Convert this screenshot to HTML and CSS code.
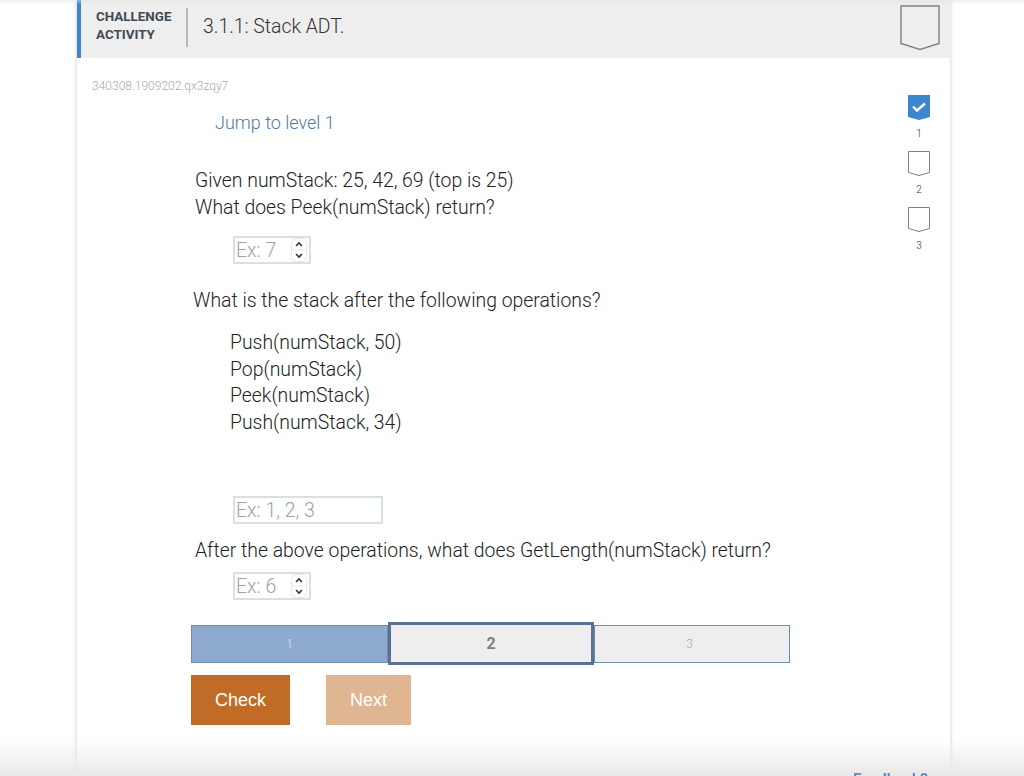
FILE: index.html
```html
<!DOCTYPE html>
<html lang="en">
<head>
    <meta charset="UTF-8">
    <meta name="viewport" content="width=device-width, initial-scale=1.0">
    <title>3.1.1: Stack ADT.</title>
    <link rel="stylesheet" href="styles.css">
</head>
<body>
    <div class="card">
        <!-- header -->
        <div class="card-header">
            <div class="activity-label">CHALLENGE<br>ACTIVITY</div>
            <div class="activity-title">3.1.1: Stack ADT.</div>
            <svg class="header-badge" width="40" height="46" viewBox="0 0 40 46">
                <path d="M1 1H39V38.500L20 44.500L1 38.500Z" fill="none" stroke="#808080" stroke-width="1.400"/>
            </svg>
        </div>

        <div class="card-body">
            <div class="main-column">
                <div class="activity-id">340308.1909202.qx3zqy7</div>
                <div class="jump-link">Jump to level 1</div>

                <p class="question q-first">Given numStack: 25, 42, 69 (top is 25)<br>What does Peek(numStack) return?</p>
                <div class="number-field field-first">
                    <input class="field-input" type="text" placeholder="Ex: 7">
                    <svg class="spinner" width="16" height="24" viewBox="0 0 16 24">
                        <rect x="0.500" y="0.500" width="15" height="23" rx="5" fill="#fff" stroke="#e6e6e6"/>
                        <path d="M0.500 12H15.500" stroke="#e6e6e6"/>
                        <path d="M5 8L8 5L11 8M5 16L8 19L11 16" fill="none" stroke="#333" stroke-width="1.600"/>
                    </svg>
                </div>

                <p class="question q-stack">What is the stack after the following operations?</p>
                <div class="operations">
                    Push(numStack, 50)<br>
                    Pop(numStack)<br>
                    Peek(numStack)<br>
                    Push(numStack, 34)
                </div>
                <input class="text-field" type="text" placeholder="Ex: 1, 2, 3">

                <p class="question q-length">After the above operations, what does GetLength(numStack) return?</p>
                <div class="number-field field-last">
                    <input class="field-input" type="text" placeholder="Ex: 6">
                    <svg class="spinner" width="16" height="24" viewBox="0 0 16 24">
                        <rect x="0.500" y="0.500" width="15" height="23" rx="5" fill="#fff" stroke="#e6e6e6"/>
                        <path d="M0.500 12H15.500" stroke="#e6e6e6"/>
                        <path d="M5 8L8 5L11 8M5 16L8 19L11 16" fill="none" stroke="#333" stroke-width="1.600"/>
                    </svg>
                </div>

                <div class="level-bar">
                    <div class="level level-done">1</div>
                    <div class="level level-current">2</div>
                    <div class="level level-todo">3</div>
                </div>

                <div class="actions">
                    <button class="btn btn-check">Check</button>
                    <button class="btn btn-next">Next</button>
                </div>
            </div>

            <!-- level checklist -->
            <div class="side-levels">
                <div class="side-level">
                    <svg width="22" height="25" viewBox="0 0 22 25">
                        <path d="M0 0H22V22L11 25L0 22Z" fill="#3d85cc"/>
                        <path d="M5 11.500L9 15.500L17 8.500" fill="none" stroke="#fff" stroke-width="2.400"/>
                    </svg>
                    <span>1</span>
                </div>
                <div class="side-level">
                    <svg width="22" height="25" viewBox="0 0 22 25">
                        <path d="M0.500 0.500H21.500V21.500L11 24.500L0.500 21.500Z" fill="#fff" stroke="#808080"/>
                    </svg>
                    <span>2</span>
                </div>
                <div class="side-level">
                    <svg width="22" height="25" viewBox="0 0 22 25">
                        <path d="M0.500 0.500H21.500V21.500L11 24.500L0.500 21.500Z" fill="#fff" stroke="#808080"/>
                    </svg>
                    <span>3</span>
                </div>
            </div>
        </div>

        <div class="feedback">Feedback?</div>
    </div>
</body>
</html>
```

FILE: styles.css
```css
* {
    margin: 0;
    padding: 0;
    box-sizing: border-box;
}

html, body {
    height: 776px;
    overflow: hidden;
    background-color: #fff;
    font-family: Roboto, 'Liberation Sans', sans-serif;
}

/* grey fade along the bottom of the window */
body::after {
    content: "";
    position: fixed;
    left: 0;
    right: 0;
    bottom: 0;
    height: 36px;
    background: linear-gradient(to bottom, rgba(232, 232, 232, 0), rgba(232, 232, 232, 1));
    pointer-events: none;
}

/* same fade, thinner, along the top */
body::before {
    content: "";
    position: fixed;
    z-index: 1;
    left: 0;
    right: 0;
    top: 0;
    height: 5px;
    background: linear-gradient(to bottom, rgba(225, 225, 225, 0.5), rgba(225, 225, 225, 0));
    pointer-events: none;
}

.card {
    width: 873px;
    margin-left: 77px;
    background-color: #fff;
    box-shadow: 0 0 5px rgba(0, 0, 0, 0.2);
}

/* header */
.card-header {
    height: 58px;
    display: flex;
    align-items: flex-start;
    background-color: #eeeeee;
    border-left: 4px solid #3d85cc;
}

.activity-label {
    width: 92px;
    height: 39px;
    margin: 8px 0 0 15px;
    border-right: 2px solid #bbbbbb;
    font-size: 13.400px;
    font-weight: 700;
    line-height: 18px;
    color: #3f4a55;
}

.activity-title {
    margin: 15px 0 0 15px;
    font-size: 19.400px;
    font-weight: 300;
    line-height: 24px;
    color: #333;
}

.header-badge {
    margin: 5px 10px 0 auto;
}

/* body */
.card-body {
    display: flex;
    height: 718px;
}

.main-column {
    flex: 1;
}

.activity-id {
    margin: 21px 0 0 15px;
    font-size: 12px;
    font-weight: 300;
    line-height: 14px;
    color: #aaa;
}

.jump-link {
    margin: 19px 0 0 138px;
    font-size: 18px;
    font-weight: 300;
    line-height: 22px;
    color: #4f78a8;
}

.question {
    font-size: 19.400px;
    font-weight: 300;
    line-height: 27px;
    color: #222;
}

.q-first {
    margin: 33px 0 0 118px;
}

.q-stack {
    margin: 23px 0 0 116px;
}

.q-length {
    margin: 13px 0 0 118px;
}

.operations {
    margin: 16px 0 0 153px;
    font-size: 19.400px;
    font-weight: 300;
    line-height: 26.500px;
    color: #222;
}

/* inputs */
.number-field {
    display: flex;
    align-items: center;
    width: 78px;
    height: 28px;
    margin-left: 156px;
    padding-right: 2px;
    background-color: #fff;
    border: 2px solid #d8dfe5;
}

.field-first {
    margin-top: 15px;
}

.field-last {
    margin-top: 8px;
}

.field-input {
    flex: 1;
    width: 40px;
    height: 100%;
    padding-left: 1px;
    border: none;
    outline: none;
    font-family: inherit;
    font-size: 19.500px;
    font-weight: 300;
}

.text-field {
    display: block;
    width: 150px;
    height: 28px;
    margin: 60px 0 0 156px;
    padding-left: 1px;
    border: 2px solid #d8dfe5;
    outline: none;
    font-family: inherit;
    font-size: 19.500px;
    font-weight: 300;
}

.field-input::placeholder,
.text-field::placeholder {
    color: #a0a0a0;
    opacity: 1;
}

/* level bar */
.level-bar {
    display: flex;
    width: 599px;
    height: 38px;
    margin: 25px 0 0 114px;
}

.level {
    display: flex;
    align-items: center;
    justify-content: center;
    border: 1px solid #6b8cb4;
    font-size: 12px;
    font-weight: 300;
}

.level-done {
    width: 197px;
    background-color: #8eabcf;
    color: #dfe8f2;
}

.level-current {
    width: 206px;
    height: 43px;
    margin-top: -3px;
    background-color: #eeeeee;
    border: 3px solid #5c7096;
    font-size: 16px;
    font-weight: 700;
    color: #808080;
}

.level-todo {
    flex: 1;
    padding-right: 5px;
    background-color: #eeeeee;
    color: #aaa;
}

/* buttons */
.actions {
    display: flex;
    gap: 36px;
    margin: 12px 0 0 114px;
}

.btn {
    height: 50px;
    border: none;
    font-family: 'Liberation Sans', Arial, sans-serif;
    font-size: 18px;
    color: #fff;
}

.btn-check {
    width: 99px;
    background-color: #c06c26;
}

.btn-next {
    width: 85px;
    background-color: #dfb592;
}

/* side checklist */
.side-levels {
    display: flex;
    flex-direction: column;
    gap: 10px;
    width: 42px;
    padding-top: 37px;
}

.side-level {
    display: flex;
    flex-direction: column;
    align-items: center;
    width: 22px;
    height: 46px;
    font-size: 10px;
    font-weight: 300;
    line-height: 12px;
    color: #333;
}

.side-level span {
    margin-top: 8px;
}

/* cut off by the window edge, as in the screenshot */
.feedback {
    position: absolute;
    z-index: 1;
    top: 770px;
    left: 853px;
    font-size: 15.500px;
    font-weight: 700;
    color: #5a8fc0;
}
```
